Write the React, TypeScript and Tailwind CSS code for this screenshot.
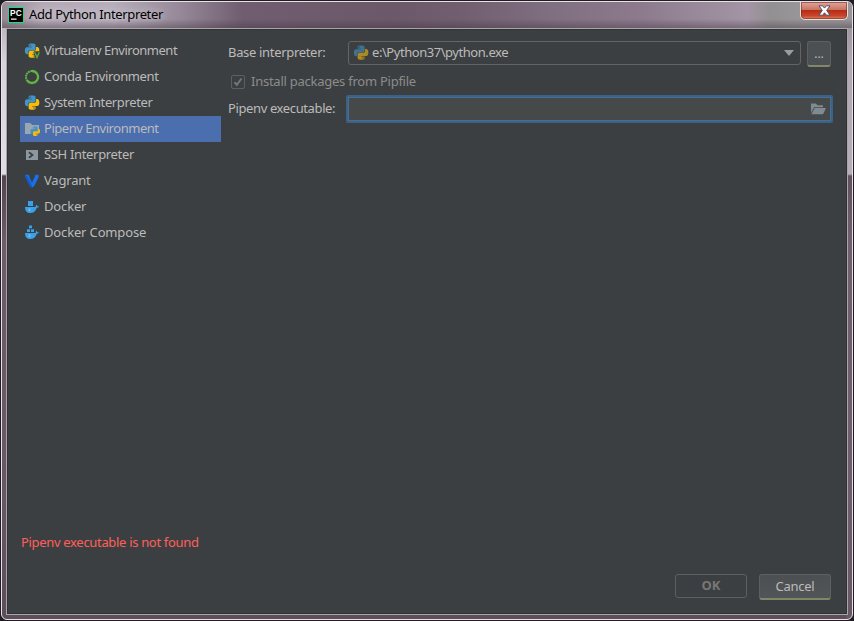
import type { ReactNode } from "react";

const PY_HALF =
  "M14.25.18l.9.2.73.26.59.3.45.32.34.34.25.34.16.33.1.3.04.26.02.2-.01.13V8.5l-.05.63-.13.55-.21.46-.26.38-.3.31-.33.25-.35.19-.35.14-.33.1-.3.07-.26.04-.21.02H8.77l-.69.05-.59.14-.5.22-.41.27-.33.32-.27.35-.2.36-.15.37-.1.35-.07.32-.04.27-.02.21v3.06H3.17l-.21-.03-.28-.07-.32-.12-.35-.18-.36-.26-.36-.36-.35-.46-.32-.59-.28-.73-.21-.88-.14-1.05-.05-1.23.06-1.22.16-1.04.24-.87.32-.71.36-.57.4-.44.42-.33.42-.24.4-.16.36-.1.32-.05.24-.01h.16l.06.01h8.16v-.83H6.18l-.01-2.75-.02-.37.05-.34.11-.31.17-.28.25-.26.31-.23.38-.2.44-.18.51-.15.58-.12.64-.1.71-.06.77-.04.84-.02 1.27.05zm-6.3 1.98l-.23.33-.08.41.08.41.23.34.33.22.41.09.41-.09.33-.22.23-.34.08-.41-.08-.41-.23-.33-.33-.22-.41-.09-.41.09z";

function PyShape() {
  return (
    <>
      <path d={PY_HALF} fill="#4195c6" />
      <path d={PY_HALF} fill="#f5bd0c" transform="rotate(180 12 12)" />
    </>
  );
}

function PythonIcon({ className = "" }: { className?: string }) {
  return (
    <svg width="16" height="16" viewBox="0 0 16 16" className={className}>
      <g transform="translate(.9 .4) scale(0.6)">
        <PyShape />
      </g>
    </svg>
  );
}

function VirtualenvIcon() {
  return (
    <svg width="16" height="16" viewBox="0 0 16 16">
      <g transform="translate(.9 .4) scale(0.6)">
        <PyShape />
      </g>
      <path d="M9.3 9.2l1.3-1H16V16h-4.4z" fill="#3c3f41" />
      <path d="M10.7 9.2l2.3 5.4 2.3-5.4" fill="none" stroke="#59a83c" strokeWidth="1.4" />
    </svg>
  );
}

function CondaIcon() {
  return (
    <svg width="16" height="16" viewBox="0 0 16 16" fill="none" stroke="#62b543">
      <path d="M8 2a6 6 0 1 1-5.2 9" strokeWidth="2.3" />
      <path d="M8 2a6 6 0 0 0-5.2 9" strokeWidth="2" strokeDasharray="1.8 .6" />
    </svg>
  );
}

function PipenvIcon() {
  return (
    <svg width="16" height="16" viewBox="0 0 16 16">
      <path d="M1 2h5.2l2 2H15v4.5H8.5L6.6 13H1z" fill="#9aa7b0" />
      <g transform="translate(6.4 5.4) scale(0.4)">
        <PyShape />
      </g>
    </svg>
  );
}

function SshIcon() {
  return (
    <svg width="16" height="16" viewBox="0 0 16 16">
      <path d="M2 3h12v10H2z" fill="#8b989f" />
      <path d="M5 5.2L8.5 8 5 10.8" fill="none" stroke="#3c3f41" strokeWidth="1.8" />
    </svg>
  );
}

function VagrantIcon() {
  return (
    <svg width="16" height="16" viewBox="0 0 16 16">
      <path d="M1.3 2.3L3.2 1.4l2 1v1.4L8 9.7l2.8-5.9V2.4l2-1 1.9.9v1.6L10 13.3 8 14.6l-2-1.3L1.3 3.9z" fill="#1573f2" />
      <path d="M1.3 2.3l2 1.1L8 12.5v2.1l-2-1.3L1.3 3.9z" fill="#1159ca" />
    </svg>
  );
}

function Whale() {
  return (
    <>
      <path d="M1 8h10.3c.5-.3.7-.8.6-1.7l.5-.6c.6.4.9.9 1 1.5.6-.1 1.1 0 1.6.3-.4.8-1.1 1.2-2.2 1.2C11.7 12 9.5 14 6.2 14 3 14 1.1 12 1 8z" fill="#3aa0e8" />
      <circle cx="5.2" cy="10.6" r="1.2" fill="#9bd1f5" />
      <circle cx="4.8" cy="10.3" r=".6" fill="#287bb8" />
    </>
  );
}

function DockerIcon() {
  return (
    <svg width="16" height="16" viewBox="0 0 16 16">
      <path d="M4 2h5v5H4z" fill="#3aa0e8" />
      <Whale />
    </svg>
  );
}

function ComposeIcon() {
  return (
    <svg width="16" height="16" viewBox="0 0 16 16">
      <path d="M5 .6h3v2.7H5zM3 4.3h3V7H3zM7 4.3h3V7H7z" fill="#3aa0e8" />
      <Whale />
    </svg>
  );
}

function FolderIcon() {
  return (
    <svg width="16" height="16" viewBox="0 0 16 16" fill="#808a92">
      <path d="M1 2.5h4.8l1.7 1.7H13v2H4L1 12z" />
      <path d="M4.6 7H16l-3 6.2H1.4z" />
    </svg>
  );
}

function AppIcon() {
  return (
    <svg width="16" height="16" viewBox="0 0 16 16">
      <rect width="16" height="16" fill="#21d789" />
      <rect x="1" y="1" width="14" height="14" fill="#000" />
      <text x="2.1" y="9" fontSize="8.5" fontWeight="700" fontFamily="Liberation Sans, sans-serif" fill="#fff" textLength="11.6" lengthAdjust="spacingAndGlyphs">PC</text>
      <path d="M3 11.6h5.6v1.2H3z" fill="#fff" />
    </svg>
  );
}

const environments: { label: string; icon: ReactNode; tracking: string }[] = [
  { label: "Virtualenv Environment", icon: <VirtualenvIcon />, tracking: "tracking-[-0.48px]" },
  { label: "Conda Environment", icon: <CondaIcon />, tracking: "tracking-[-0.4px]" },
  { label: "System Interpreter", icon: <PythonIcon />, tracking: "tracking-[-0.38px]" },
  { label: "Pipenv Environment", icon: <PipenvIcon />, tracking: "tracking-[-0.47px]" },
  { label: "SSH Interpreter", icon: <SshIcon />, tracking: "tracking-[-0.33px]" },
  { label: "Vagrant", icon: <VagrantIcon />, tracking: "tracking-[-0.2px]" },
  { label: "Docker", icon: <DockerIcon />, tracking: "tracking-[-0.15px]" },
  { label: "Docker Compose", icon: <ComposeIcon />, tracking: "tracking-[-0.15px]" },
];

function TitleBar() {
  return (
    <div className="flex h-[26px] shrink-0 items-start bg-[linear-gradient(180deg,transparent_65%,#3b303c66),linear-gradient(90deg,#938a94_0,#b4aab7_40px,#b7aebb_110px,#958797_180px,#705e70_240px,#6b596a_390px,#715f70_460px,#806f80_550px,#8d7b8d_640px,#a395a5_745px,#929092_768px,#999699_800px)] pl-[6px]">
      <div className="pt-[5px]">
        <AppIcon />
      </div>
      <h1 className="ml-[5px] pt-[2px] text-[13px] leading-5 tracking-[-0.36px] text-black [text-shadow:0_0_8px_#ffffffb0]">Add Python Interpreter</h1>
      <button className="mr-[4px] ml-auto flex h-[18px] w-[48px] items-center justify-center rounded-b-[5px] border border-t-0 border-[#e9dedd] bg-[linear-gradient(180deg,#dfa79d_0,#cb7464_45%,#b62e18_50%,#c74429_80%,#df8061)] shadow-[inset_0_0_0_1px_#6e302899]">
        <svg width="13" height="11" viewBox="0 0 13 11">
          <path d="M1 .8h3.6l1.9 2.3L8.4.8H12L8.7 5.4l3.3 4.8H8.4L6.5 7.8l-1.9 2.4H1l3.3-4.8z" fill="#fff" stroke="#4d5364" />
        </svg>
      </button>
    </div>
  );
}

export default function App() {
  return (
    <div className="h-[621px] w-[854px] overflow-hidden bg-[#211b24] p-px font-['Noto_Sans',sans-serif] text-[13px] text-[#bbbbbb]">
      <div className="flex h-[619px] w-[852px] flex-col overflow-hidden rounded-[6px] border border-[#e8e1e8] bg-[linear-gradient(90deg,transparent_844px,#75697566_844px),linear-gradient(180deg,#aaa1ad_0,#d8d2dc_60px,#e1dce5_172px,#53434f_174px,#6e5b6b_240px,#665767_500px,#5c4d59)]">
        <TitleBar />
        <div className="mx-[4px] flex h-[587px] flex-col border border-[#aaa5aa] bg-[#3c3f41] shadow-[inset_0_0_0_1px_#303234]">
          <div className="flex h-[500px] pt-[9px] pl-[13px]">
            <ul className="w-[201px] shrink-0">
              {environments.map((env) => (
                <li
                  key={env.label}
                  className={`flex h-[26px] items-center gap-1 pl-1 whitespace-nowrap ${env.label === "Pipenv Environment" ? "bg-[#4b6eaf]" : ""}`}
                >
                  {env.icon}
                  <span className={env.tracking}>{env.label}</span>
                </li>
              ))}
            </ul>
            <div className="ml-[7px] w-[605px] pt-[3px]">
              <div className="flex h-[24px] items-center">
                <label className="w-[120px] tracking-[-0.32px] whitespace-nowrap">Base interpreter:</label>
                <div className="flex h-[24px] w-[453px] items-center rounded-[3px] border border-[#646464] pr-[6px] pl-[4px]">
                  <PythonIcon className="opacity-60" />
                  <span className="ml-[3px] tracking-[-0.45px]">e:\Python37\python.exe</span>
                  <svg width="10" height="6" viewBox="0 0 10 6" className="ml-auto">
                    <path d="M0 0h10L5 6z" fill="#9a9da0" />
                  </svg>
                </div>
                <button className="ml-[6px] h-[26px] w-[24px] self-start rounded-[3px] border border-b-2 border-[#5e6060] border-b-[#84866a] bg-[#4c5052] text-[12px] leading-5">...</button>
              </div>
              <div className="mt-[5px] flex h-[24px] items-center pl-[3px] text-[#8c8c8c]">
                <svg width="14" height="14" viewBox="0 0 14 14" className="mr-[6px] mb-px">
                  <rect x=".5" y=".5" width="13" height="13" rx="1.5" fill="none" stroke="#5d5f60" />
                  <path d="M3.5 7.2l2.3 2.7 4.7-6.4" fill="none" stroke="#737577" strokeWidth="2" />
                </svg>
                <span className="tracking-[-0.25px]">Install packages from Pipfile</span>
              </div>
              <div className="mt-[1px] flex h-[28px] items-center">
                <label className="w-[118px] tracking-[-0.38px] whitespace-nowrap">Pipenv executable:</label>
                <div className="flex h-[28px] w-[487px] items-center justify-end rounded-[2px] border-2 border-[#3d6185] bg-[#45494a] pr-[5px] shadow-[inset_0_0_0_1px_#466d94]">
                  <FolderIcon />
                </div>
              </div>
            </div>
          </div>
          <p className="mt-[3px] h-[20px] pl-[14px] leading-5 tracking-[-0.32px] text-[#ff5f5a]">Pipenv executable is not found</p>
          <div className="mt-[22px] flex gap-[12px] pl-[668px]">
            <button className="h-[24px] w-[72px] rounded-[3px] border border-[#5e6060] font-bold text-[#777777]">OK</button>
            <button className="h-[26px] w-[72px] rounded-[3px] border border-b-2 border-[#5e6060] border-b-[#84866a] bg-[linear-gradient(180deg,#4c5052,#515557)] tracking-[-0.25px]">Cancel</button>
          </div>
        </div>
      </div>
    </div>
  );
}
